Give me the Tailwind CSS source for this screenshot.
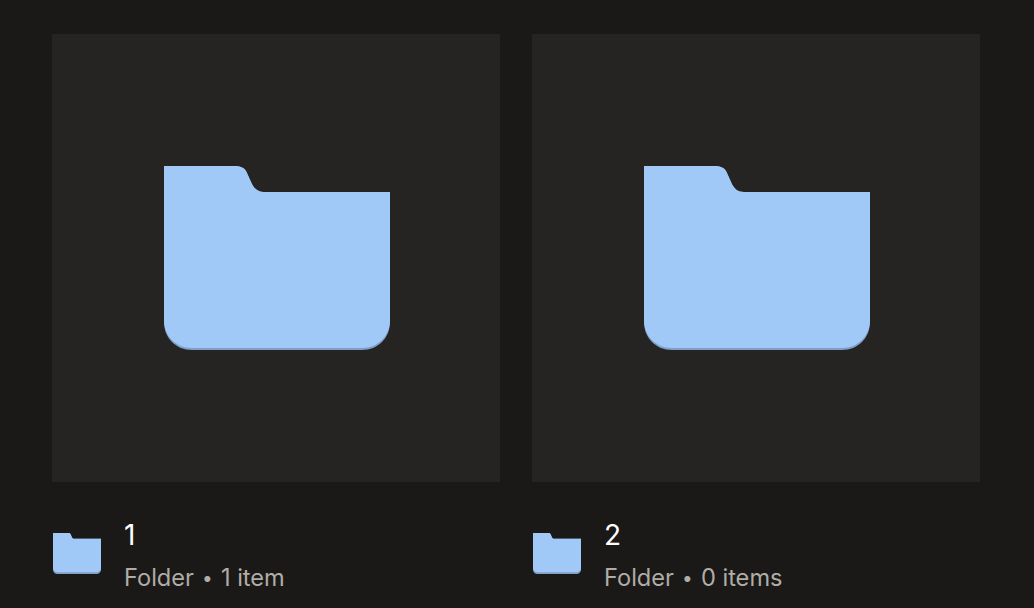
<!DOCTYPE html>
<html lang="en">
<head>
    <meta charset="UTF-8" />
    <meta name="viewport" content="width=device-width, initial-scale=1" />
    <title>Folders</title>
    <script src="https://cdn.jsdelivr.net/npm/@tailwindcss/browser@4"></script>
</head>
<body class="bg-[#1a1918] h-[608px] overflow-hidden font-['Inter',sans-serif]">
<div class="grid grid-cols-[448px_448px] gap-x-8 pl-[52px] pt-[34px]">
    <div>
        <div class="w-[448px] h-[448px] pl-[2px] bg-[#252422] flex items-center justify-center">
            <svg class="w-[226px] h-[184px]" viewBox="0 0 226 184">
                <path fill="#7f9fc6" d="M0 0H71C77 0 81 2 83 7L87 16C90 23 94 26 100 26H226V156C226 172 214 184 198 184H28C12 184 0 172 0 156Z" />
                <path fill="#a1c9f7" d="M0 0H71C77 0 81 2 83 7L87 16C90 23 94 26 100 26H226V154C226 170 214 182 198 182H28C12 182 0 170 0 154Z" />
            </svg>
        </div>
        <div class="flex mt-[36px]">
            <svg class="w-[48px] h-[41px] ml-[1px] mt-[15px] shrink-0" viewBox="0 0 226 184" preserveAspectRatio="none">
                <path fill="#7f9fc6" d="M0 0H73C78 0 81 2 83 6L88 17C91 23 94 26 99 26H226V166C226 176 216 184 206 184H20C10 184 0 176 0 166Z" />
                <path fill="#a1c9f7" d="M0 0H73C78 0 81 2 83 6L88 17C91 23 94 26 99 26H226V158C226 168 216 176 206 176H20C10 176 0 168 0 158Z" />
            </svg>
            <div class="ml-[23px]">
                <p class="text-[28px] leading-[36px] mt-[-1px] text-white">1</p>
                <p class="text-[23.6px] leading-[32px] mt-[9px] text-[#b0ada6]">Folder <span class="text-[19px] px-[1.5px] align-[1px]">•</span> 1 item</p>
            </div>
        </div>
    </div>
    <div>
        <div class="w-[448px] h-[448px] pl-[2px] bg-[#252422] flex items-center justify-center">
            <svg class="w-[226px] h-[184px]" viewBox="0 0 226 184">
                <path fill="#7f9fc6" d="M0 0H71C77 0 81 2 83 7L87 16C90 23 94 26 100 26H226V156C226 172 214 184 198 184H28C12 184 0 172 0 156Z" />
                <path fill="#a1c9f7" d="M0 0H71C77 0 81 2 83 7L87 16C90 23 94 26 100 26H226V154C226 170 214 182 198 182H28C12 182 0 170 0 154Z" />
            </svg>
        </div>
        <div class="flex mt-[36px]">
            <svg class="w-[48px] h-[41px] ml-[1px] mt-[15px] shrink-0" viewBox="0 0 226 184" preserveAspectRatio="none">
                <path fill="#7f9fc6" d="M0 0H73C78 0 81 2 83 6L88 17C91 23 94 26 99 26H226V166C226 176 216 184 206 184H20C10 184 0 176 0 166Z" />
                <path fill="#a1c9f7" d="M0 0H73C78 0 81 2 83 6L88 17C91 23 94 26 99 26H226V158C226 168 216 176 206 176H20C10 176 0 168 0 158Z" />
            </svg>
            <div class="ml-[23px]">
                <p class="text-[28px] leading-[36px] mt-[-1px] text-white">2</p>
                <p class="text-[23.6px] leading-[32px] mt-[9px] text-[#b0ada6]">Folder <span class="text-[19px] px-[1.5px] align-[1px]">•</span> 0 items</p>
            </div>
        </div>
    </div>
</div>
</body>
</html>
